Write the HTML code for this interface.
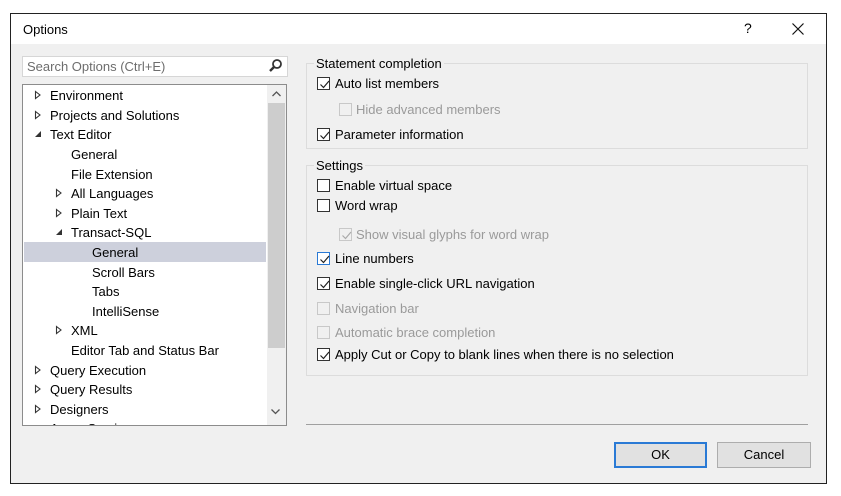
<!DOCTYPE html>
<html><head><meta charset="utf-8"><style>
*{margin:0;padding:0;box-sizing:border-box}
body{width:841px;height:496px;background:#fff;position:relative;overflow:hidden;font-family:"Liberation Sans",sans-serif;font-size:13px;color:#000}
.a{position:absolute;white-space:nowrap}
.dlg{position:absolute;left:10px;top:13px;width:817px;height:471px;border:1px solid #222;background:#f0f0f0}
.tb{position:absolute;left:11px;top:14px;width:815px;height:30px;background:#fff}
.row{position:absolute;height:19px;line-height:19px;top:1px}
.tri{position:absolute}
.cb{position:absolute;width:13px;height:13px;border:1px solid #333;background:#fff}
.cb.d{border-color:#c8c8c8;background:#f0f0f0}
.cb svg{position:absolute;left:1px;top:1px}
.gb{position:absolute;border:1px solid #dcdcdc}
.lg{position:absolute;background:#f0f0f0;padding:0 2px}
.gray{color:#9a9a9a}
</style></head><body>
<div class="dlg"></div>
<div class="tb"></div>
<div class="a" style="left:23px;top:22px;font-size:13px">Options</div>
<div class="a" style="left:744px;top:20px;font-size:14px">?</div>
<svg class="a" style="left:792px;top:23px" width="12" height="12"><path d="M0.5 0.5L11.5 11.5M11.5 0.5L0.5 11.5" stroke="#111" stroke-width="1.2"/></svg>

<div class="a" style="left:22px;top:56px;width:266px;height:21px;background:#fff;border:1px solid #d6d6d6"></div>
<div class="a gray" style="left:27px;top:59px;color:#6d6d6d">Search Options (Ctrl+E)</div>
<svg class="a" style="left:268px;top:58px" width="15" height="15"><circle cx="9" cy="6" r="4" fill="none" stroke="#333" stroke-width="1.8"/><path d="M6 9L2 13" stroke="#333" stroke-width="2.4"/></svg>

<div class="a" style="left:22px;top:84px;width:265px;height:342px;background:#fff;border:1px solid #8c8c8c"></div>
<div class="a" style="left:267px;top:85px;width:19px;height:340px;background:#f0f0f0"></div>
<div class="a" style="left:268px;top:103px;width:17px;height:245px;background:#cdcdcd"></div>
<svg class="a" style="left:272px;top:91px" width="9" height="6"><path d="M0.5 5L4.5 1L8.5 5" fill="none" stroke="#555" stroke-width="1.3"/></svg>
<svg class="a" style="left:271px;top:409px" width="9" height="6"><path d="M0.5 0.5L4.5 4.5L8.5 0.5" fill="none" stroke="#555" stroke-width="1.3"/></svg>
<div class="a" style="left:24px;top:242px;width:242px;height:20px;background:#cdd0dc"></div>

<svg width="0" height="0" style="position:absolute"><defs>
<g id="c"><path d="M1.5 1.5L6 5L1.5 8.5Z" fill="#fff" stroke="#333" stroke-width="1.1"/></g>
<g id="e"><path d="M7 2L7 8L1 8Z" fill="#333"/></g></defs></svg>
<div style="position:absolute;left:0;top:0;width:266px;height:425px;overflow:hidden">
<svg class="tri" style="left:34px;top:90px" width="9" height="10"><use href="#c"/></svg><div class="row" style="left:50px;top:86px">Environment</div>
<svg class="tri" style="left:34px;top:110px" width="9" height="10"><use href="#c"/></svg><div class="row" style="left:50px;top:106px">Projects and Solutions</div>
<svg class="tri" style="left:34px;top:129px" width="9" height="10"><use href="#e"/></svg><div class="row" style="left:50px;top:125px">Text Editor</div>
<div class="row" style="left:71px;top:145px">General</div>
<div class="row" style="left:71px;top:165px">File Extension</div>
<svg class="tri" style="left:55px;top:188px" width="9" height="10"><use href="#c"/></svg><div class="row" style="left:71px;top:184px">All Languages</div>
<svg class="tri" style="left:55px;top:208px" width="9" height="10"><use href="#c"/></svg><div class="row" style="left:71px;top:204px">Plain Text</div>
<svg class="tri" style="left:55px;top:227px" width="9" height="10"><use href="#e"/></svg><div class="row" style="left:71px;top:223px">Transact-SQL</div>
<div class="row" style="left:92px;top:243px">General</div>
<div class="row" style="left:92px;top:263px">Scroll Bars</div>
<div class="row" style="left:92px;top:282px">Tabs</div>
<div class="row" style="left:92px;top:302px">IntelliSense</div>
<svg class="tri" style="left:55px;top:325px" width="9" height="10"><use href="#c"/></svg><div class="row" style="left:71px;top:321px">XML</div>
<div class="row" style="left:71px;top:341px">Editor Tab and Status Bar</div>
<svg class="tri" style="left:34px;top:365px" width="9" height="10"><use href="#c"/></svg><div class="row" style="left:50px;top:361px">Query Execution</div>
<svg class="tri" style="left:34px;top:384px" width="9" height="10"><use href="#c"/></svg><div class="row" style="left:50px;top:380px">Query Results</div>
<svg class="tri" style="left:34px;top:404px" width="9" height="10"><use href="#c"/></svg><div class="row" style="left:50px;top:400px">Designers</div>
<div class="row" style="left:50px;top:419px">Azure Services</div>
</div>

<div class="gb" style="left:306px;top:63px;width:502px;height:86px"></div>
<div class="lg" style="left:314px;top:56px">Statement completion</div>
<div class="gb" style="left:306px;top:165px;width:502px;height:211px"></div>
<div class="lg" style="left:314px;top:158px">Settings</div>

<div class="cb" style="left:317px;top:77px"><svg width="11" height="11"><path d="M1.5 5.5L4.5 8.5L10 2" fill="none" stroke="#222" stroke-width="1.2"/></svg></div>
<div class="a" style="left:335px;top:76px">Auto list members</div>
<div class="cb d" style="left:339px;top:103px"></div>
<div class="a gray" style="left:356px;top:102px">Hide advanced members</div>
<div class="cb" style="left:317px;top:128px"><svg width="11" height="11"><path d="M1.5 5.5L4.5 8.5L10 2" fill="none" stroke="#222" stroke-width="1.2"/></svg></div>
<div class="a" style="left:335px;top:127px">Parameter information</div>

<div class="cb" style="left:317px;top:179px"></div>
<div class="a" style="left:335px;top:178px">Enable virtual space</div>
<div class="cb" style="left:317px;top:199px"></div>
<div class="a" style="left:335px;top:198px">Word wrap</div>
<div class="cb d" style="left:339px;top:228px"><svg width="11" height="11"><path d="M1.5 5.5L4.5 8.5L10 2" fill="none" stroke="#aaa" stroke-width="1.2"/></svg></div>
<div class="a gray" style="left:356px;top:227px">Show visual glyphs for word wrap</div>
<div class="cb" style="left:317px;top:252px;border-color:#2a7ad5"><svg width="11" height="11"><path d="M1.5 5.5L4.5 8.5L10 2" fill="none" stroke="#222" stroke-width="1.2"/></svg></div>
<div class="a" style="left:335px;top:251px">Line numbers</div>
<div class="cb" style="left:317px;top:277px"><svg width="11" height="11"><path d="M1.5 5.5L4.5 8.5L10 2" fill="none" stroke="#222" stroke-width="1.2"/></svg></div>
<div class="a" style="left:335px;top:276px">Enable single-click URL navigation</div>
<div class="cb d" style="left:317px;top:302px"></div>
<div class="a gray" style="left:335px;top:301px">Navigation bar</div>
<div class="cb d" style="left:317px;top:326px"></div>
<div class="a gray" style="left:335px;top:325px">Automatic brace completion</div>
<div class="cb" style="left:317px;top:348px"><svg width="11" height="11"><path d="M1.5 5.5L4.5 8.5L10 2" fill="none" stroke="#222" stroke-width="1.2"/></svg></div>
<div class="a" style="left:335px;top:347px">Apply Cut or Copy to blank lines when there is no selection</div>

<div class="a" style="left:306px;top:424px;width:502px;height:1px;background:#a0a0a0"></div>
<div class="a" style="left:614px;top:442px;width:93px;height:26px;border:2px solid #2a7ad5;background:#e1e1e1;text-align:center;line-height:22px">OK</div>
<div class="a" style="left:717px;top:442px;width:94px;height:26px;border:1px solid #adadad;background:#e1e1e1;text-align:center;line-height:24px">Cancel</div>
</body></html>
